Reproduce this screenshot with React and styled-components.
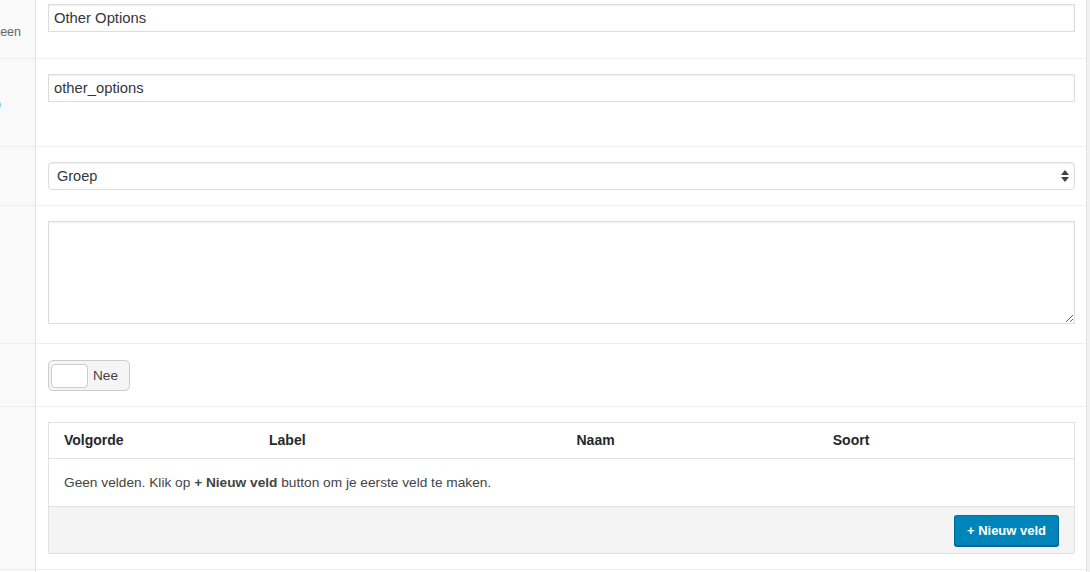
import React from 'react';
import styled, { createGlobalStyle } from 'styled-components';

const GlobalStyle = createGlobalStyle`
body {
  margin: 0;
  background: #f1f1f1;
  font-family: "Liberation Sans", Arial, sans-serif;
  color: #444;
}
`;

const Box = styled.div`
width: 1086px;
background: #fff;
border-right: 1px solid #e1e1e1;
overflow: hidden;
`;

const Row = styled.div`
display: flex;
border-bottom: 1px solid #eee;
min-height: ${p => p.h}px;
`;

const LabelCol = styled.div`
width: 35px;
flex: none;
background: #f9f9f9;
border-right: 1px solid #e1e1e1;
overflow: hidden;
display: flex;
flex-direction: column;
align-items: flex-end;
padding-top: ${p => p.top || 0}px;
`;

const Desc = styled.span`
font-size: 12.5px;
color: #666;
white-space: nowrap;
padding-right: 14px;
`;

const HelpDot = styled.span`
width: 12px;
height: 12px;
border-radius: 50%;
background: #7fcdf0;
margin-right: 34px;
flex: none;
`;

const FieldCol = styled.div`
flex: 1;
padding: ${p => p.pad || '15px'} 11px 0 12px;
`;

const TextInput = styled.input`
display: block;
box-sizing: border-box;
width: 100%;
height: 28px;
padding: 3px 5px;
border: 1px solid #ddd;
box-shadow: inset 0 1px 2px rgba(0,0,0,.07);
font: 14.8px "Liberation Sans", Arial, sans-serif;
color: #32373c;
outline: none;
`;

const SelectBox = styled.div`
box-sizing: border-box;
height: 28px;
border: 1px solid #ddd;
border-radius: 4px;
box-shadow: inset 0 1px 2px rgba(0,0,0,.07);
display: flex;
align-items: center;
justify-content: space-between;
padding: 0 5px 0 8px;
font-size: 14.5px;
color: #32373c;
`;

const TextArea = styled.textarea`
display: block;
box-sizing: border-box;
width: 100%;
height: 103px;
border: 1px solid #ddd;
box-shadow: inset 0 1px 2px rgba(0,0,0,.07);
resize: vertical;
outline: none;
`;

const Toggle = styled.div`
display: inline-flex;
align-items: center;
box-sizing: border-box;
height: 31px;
padding: 2px 11px 2px 2px;
gap: 5px;
background: #f5f5f5;
border: 1px solid #ccc;
border-radius: 5px;
font-size: 13.6px;
color: #444;
`;

const Knob = styled.span`
width: 37px;
height: 24px;
box-sizing: border-box;
background: #fff;
border: 1px solid #ccc;
border-radius: 4px;
`;

const Table = styled.div`
border: 1px solid #e1e1e1;
`;

const Head = styled.div`
display: flex;
height: 36px;
padding-bottom: 2px;
box-sizing: border-box;
align-items: center;
border-bottom: 1px solid #e1e1e1;
`;

const Th = styled.div`
width: ${p => p.w}%;
box-sizing: border-box;
padding-left: 15px;
font-weight: bold;
font-size: 14px;
color: #23282d;
`;

const Empty = styled.div`
height: 48px;
box-sizing: border-box;
display: flex;
align-items: center;
padding-left: 15px;
font-size: 13.7px;
color: #444;
border-bottom: 1px solid #e1e1e1;
`;

const Foot = styled.div`
height: 46px;
background: #f4f4f4;
display: flex;
align-items: center;
justify-content: flex-end;
padding-right: 15px;
`;

const Button = styled.button`
height: 31px;
width: 105px;
background: #0085ba;
border: 1px solid #0073aa;
border-color: #0073aa #006799 #006799;
border-radius: 3px;
box-shadow: 0 1px 0 #006799;
color: #fff;
font: bold 13px "Liberation Sans", Arial, sans-serif;
margin-top: 1px;
`;

const Arrows = () => (
  <svg width="8" height="12" viewBox="0 0 8 12">
    <path d="M4 0 L8 5 L0 5 Z" fill="#444" />
    <path d="M4 12 L8 7 L0 7 Z" fill="#444" />
  </svg>
);

export default function App() {
  return (
    <Box>
      <GlobalStyle />
      <Row h={58}>
        <LabelCol top={25}><Desc>een</Desc></LabelCol>
        <FieldCol pad="4px"><TextInput defaultValue="Other Options" /></FieldCol>
      </Row>
      <Row h={87}>
        <LabelCol top={40}><HelpDot /></LabelCol>
        <FieldCol><TextInput defaultValue="other_options" /></FieldCol>
      </Row>
      <Row h={58}>
        <LabelCol />
        <FieldCol><SelectBox>Groep<Arrows /></SelectBox></FieldCol>
      </Row>
      <Row h={137}>
        <LabelCol />
        <FieldCol><TextArea /></FieldCol>
      </Row>
      <Row h={62}>
        <LabelCol />
        <FieldCol pad="16px"><Toggle><Knob />Nee</Toggle></FieldCol>
      </Row>
      <Row h={162}>
        <LabelCol />
        <FieldCol>
          <Table>
            <Head>
              <Th w={20}>Volgorde</Th>
              <Th w={30}>Label</Th>
              <Th w={25}>Naam</Th>
              <Th w={25}>Soort</Th>
            </Head>
            <Empty>Geen velden. Klik op&nbsp;<b>+ Nieuw veld</b>&nbsp;button om je eerste veld te maken.</Empty>
            <Foot><Button>+ Nieuw veld</Button></Foot>
          </Table>
        </FieldCol>
      </Row>
      <Row h={20}>
        <LabelCol />
        <FieldCol />
      </Row>
    </Box>
  );
}
